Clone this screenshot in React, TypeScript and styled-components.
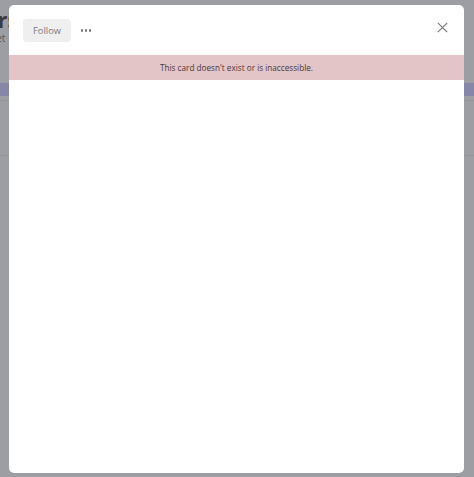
import React from "react";
import styled, { createGlobalStyle } from "styled-components";

const Global = createGlobalStyle`
  html, body { margin: 0; padding: 0; }
  body { font-family: "Open Sans", "Noto Sans", sans-serif; background: #9d9ea3; }
`;

const Page = styled.div`
  position: relative;
  width: 474px;
  height: 477px;
  overflow: hidden;
  background: #9d9ea3;
`;

const Behind = styled.div`
  display: flex;
  flex-direction: column;
  padding-top: 6px;
`;

const BgTitle = styled.div`
  margin-left: -43px;
  font-size: 22px;
  font-weight: 700;
  line-height: 26px;
  color: #3b3c40;
  white-space: nowrap;
`;

const BgSub = styled.div`
  margin-left: -21px;
  margin-top: 0px;
  font-size: 10px;
  line-height: 12px;
  color: #55565a;
  white-space: nowrap;
`;

const BgBand = styled.div`
  margin-top: 39px;
  height: 13px;
  background: #8586a8;
`;

const BgLine = styled.div<{ $gap: number }>`
  margin-top: ${(p) => p.$gap}px;
  height: 1px;
  background: #919297;
`;

const Modal = styled.div`
  position: absolute;
  left: 9px;
  top: 5px;
  width: 455px;
  height: 468px;
  background: #ffffff;
  border-radius: 5px;
  display: flex;
  flex-direction: column;
  overflow: hidden;
`;

const Header = styled.div`
  display: flex;
  align-items: center;
  height: 50px;
  padding: 0 16px 0 14px;
  gap: 10px;
`;

const FollowButton = styled.button`
  height: 23px;
  width: 48px;
  border: none;
  border-radius: 4px;
  background: #efeff0;
  color: #77787c;
  font-family: "Open Sans", "Noto Sans", sans-serif;
  font-size: 9.3px;
  padding: 0;
`;

const Dots = styled.div`
  display: flex;
  gap: 1.6px;
  margin-top: 1px;
`;

const Dot = styled.span`
  width: 2.3px;
  height: 2.3px;
  border-radius: 50%;
  background: #76777b;
`;

const Spacer = styled.div`
  flex: 1;
`;

const CloseButton = styled.button`
  border: none;
  background: transparent;
  padding: 0;
  width: 11px;
  height: 11px;
  display: flex;
  margin-top: -5px;
`;

const Banner = styled.div`
  height: 25px;
  background: #e3c5c7;
  display: flex;
  align-items: center;
  justify-content: center;
  font-size: 8.2px;
  color: #47383a;
`;

export default function App() {
  return (
    <Page>
      <Global />
      <Behind>
        <BgTitle>Users</BgTitle>
        <BgSub>Sheet</BgSub>
        <BgBand />
        <BgLine $gap={4} />
        <BgLine $gap={54} />
      </Behind>
      <Modal>
        <Header>
          <FollowButton>Follow</FollowButton>
          <Dots>
            <Dot />
            <Dot />
            <Dot />
          </Dots>
          <Spacer />
          <CloseButton aria-label="Close">
            <svg width="11" height="11" viewBox="0 0 11 11">
              <path d="M0.8 0.8L10.2 10.2M10.2 0.8L0.8 10.2" stroke="#7a7b7f" strokeWidth="1.2" fill="none" />
            </svg>
          </CloseButton>
        </Header>
        <Banner>This card doesn't exist or is inaccessible.</Banner>
      </Modal>
    </Page>
  );
}
